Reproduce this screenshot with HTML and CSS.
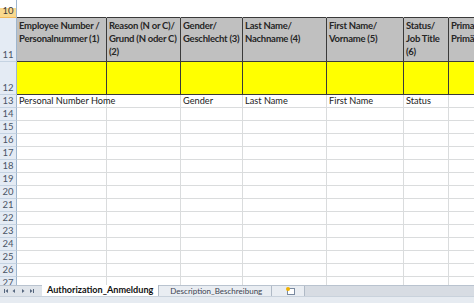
FILE: index.html
```html
<!DOCTYPE html>
<html>
<head>
<meta charset="utf-8">
<link rel="stylesheet" href="styles.css">
</head>
<body>
<div class="app">
  <div class="sheet">
    <div class="rh sel">10</div>
    <div class="c blank"></div><div class="c blank"></div><div class="c blank"></div><div class="c blank"></div><div class="c blank"></div><div class="c blank"></div><div class="c blank"></div>

    <div class="rh">11</div>
    <div class="c hd">Employee Number / Personalnummer (1)</div>
    <div class="c hd">Reason (N or C)/ Grund (N oder C) (2)</div>
    <div class="c hd">Gender/ Geschlecht (3)</div>
    <div class="c hd">Last Name/ Nachname (4)</div>
    <div class="c hd">First Name/ Vorname (5)</div>
    <div class="c hd">Status/ Job Title (6)</div>
    <div class="c hd clip">Primary/<br>Primär</div>

    <div class="rh">12</div>
    <div class="c yl"></div><div class="c yl"></div><div class="c yl"></div><div class="c yl"></div><div class="c yl"></div><div class="c yl"></div><div class="c yl"></div>

    <div class="rh">13</div>
    <div class="c ov">Personal Number Home</div><div class="c"></div><div class="c">Gender</div><div class="c">Last Name</div><div class="c">First Name</div><div class="c">Status</div><div class="c"></div>
  </div>
  <div class="sheet body" id="body"></div>
  <div class="tabs">
    <div class="nav">
      <svg width="40" height="10" viewBox="0 0 40 10">
        <g fill="#56677e">
          <rect x="4" y="3" width="1" height="4"/><path d="M8 3 L5.5 5 L8 7 Z"/>
          <path d="M15 3 L12.5 5 L15 7 Z"/>
          <path d="M22 3 L24.5 5 L22 7 Z"/>
          <path d="M30 3 L32.5 5 L30 7 Z"/><rect x="33" y="3" width="1" height="4"/>
        </g>
      </svg>
    </div>
    <div class="tab active">Authorization_Anmeldung</div>
    <div class="tab">Description_Beschreibung</div>
    <div class="tab ins">
      <svg width="14" height="10" viewBox="0 0 14 10">
        <rect x="3.5" y="2.5" width="7" height="6" fill="#fff" stroke="#7a8aa0" stroke-width="1"/>
        <circle cx="4" cy="3" r="2" fill="#f0b000"/>
      </svg>
    </div>
    <div class="scroll"></div>
  </div>
  <div class="status"></div>
</div>
<script>
  var b = document.getElementById('body');
  var h = '';
  for (var r = 14; r <= 27; r++) {
    h += '<div class="rh">' + r + '</div>';
    for (var c = 0; c < 7; c++) h += '<div class="c"></div>';
  }
  b.innerHTML = h;
</script>
</body>
</html>
```
FILE: styles.css
```css
* { box-sizing: border-box; margin: 0; padding: 0; }
html, body { width: 474px; height: 303px; overflow: hidden; background: #fff; }
body { font-family: Lato, "Liberation Sans", sans-serif; font-size: 9.2px; color: #000; }
.app { display: flex; flex-direction: column; height: 303px; }
.sheet {
  display: grid;
  grid-template-columns: 17px 90px 74px 62px 84px 77px 45px 60px;
  grid-template-rows: 18px 44px 33px 13px;
}
.sheet.body { grid-template-rows: repeat(14, 13px); flex: 1; overflow: hidden; min-height: 0; }
.rh {
  background: #e4ebf4;
  color: #4a5566;
  border-right: 1px solid #9eb6ce;
  border-bottom: 1px solid #c5d3e2;
  display: flex; align-items: flex-end; justify-content: center;
  font-size: 9.5px; line-height: 12px;
}
.rh.sel { background: linear-gradient(#fff 0 48%, #f9d98e 48%); border-bottom-color: #f2b95a; color: #3b3b3b; }
.c {
  border-right: 1px solid #dadcdd;
  border-bottom: 1px solid #dadcdd;
  padding: 0 2px; line-height: 12px; white-space: nowrap; overflow: hidden; color: #222;
}
.c.ov { overflow: visible; position: relative; z-index: 1; }
.c.blank { border-right-color: #fff; border-bottom-color: #fff; }
.c.hd {
  background: #c0c0c0; font-weight: bold; white-space: normal;
  font-size: 9.5px; letter-spacing: -0.25px;
  border-right: 1px solid #3a3a3a; border-bottom: 1px solid #3a3a3a;
  line-height: 13px; padding-top: 1px; color: #262626;
}
.c.hd.clip { white-space: nowrap; }
.sheet > .c.blank { border-bottom: 1px solid #3a3a3a; }
.c.yl { background: #ffff00; border-right: 1px solid #3a3a3a; border-bottom: 1px solid #3a3a3a; }
.tabs {
  height: 11px; display: flex; align-items: stretch;
  background: #dfe4ea; border-top: 1px solid #b9c3cf; font-size: 8px;
}
.nav { width: 42px; display: flex; align-items: center; }
.tab { padding: 0 9px 0 11px; line-height: 10px; color: #3c4350; background: #e9edf2; border-right: 1px solid #b0bac6; }
.tab.active { background: #fff; font-weight: bold; color: #111; margin-top: -1px; padding: 0 5px 0 5px; font-size: 9.1px; }
.tab.ins { padding: 0 6px 0 12px; display: flex; align-items: center; }
.scroll { flex: 1; background: #d7dce3; }
.status { height: 7px; background: #e6ebf1; border-top: 1px solid #c9d2dc; }
```
